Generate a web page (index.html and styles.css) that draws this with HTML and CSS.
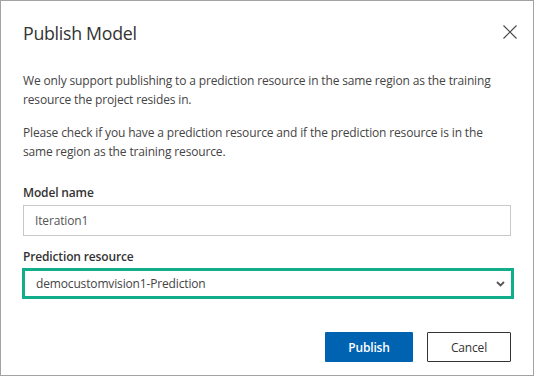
FILE: index.html
```html
<!DOCTYPE html>
<html>
<head>
<meta charset="utf-8">
<link rel="stylesheet" href="styles.css">
</head>
<body>
<div class="dialog">
  <div class="header">
    <div class="title">Publish Model</div>
    <div class="close">
      <svg width="14" height="14" viewBox="0 0 14 14"><path d="M0.5 0.5 L13.5 13.5 M13.5 0.5 L0.5 13.5" stroke="#444" stroke-width="1.1" fill="none"/></svg>
    </div>
  </div>
  <p class="text p1">We only support publishing to a prediction resource in the same region as the training resource the project resides in.</p>
  <p class="text p2">Please check if you have a prediction resource and if the prediction resource is in the same region as the training resource.</p>
  <div class="label l1">Model name</div>
  <div class="input">Iteration1</div>
  <div class="label l2">Prediction resource</div>
  <div class="select">
    <span>democustomvision1-Prediction</span>
    <svg width="9" height="6" viewBox="0 0 9 6"><path d="M1 1 L4.5 4.5 L8 1" stroke="#555" stroke-width="1.8" fill="none"/></svg>
  </div>
  <div class="footer">
    <div class="btn primary">Publish</div>
    <div class="btn secondary">Cancel</div>
  </div>
</div>
</body>
</html>
```
FILE: styles.css
```css
html, body {
  margin: 0;
  padding: 0;
  background: #ffffff;
}
.dialog {
  box-sizing: border-box;
  width: 534px;
  height: 376px;
  border: 1px solid #a3a3a3;
  padding: 0 22px;
  display: flex;
  flex-direction: column;
  font-family: "Open Sans", "Noto Sans", sans-serif;
  color: #444;
  letter-spacing: -0.15px;
}
.header {
  display: flex;
  justify-content: space-between;
  align-items: center;
  padding-top: 20px;
  height: 24px;
}
.title {
  font-size: 17.8px;
  font-weight: 400;
  color: #333;
  line-height: 24px;
  letter-spacing: -0.3px;
}
.close {
  width: 26px;
  height: 26px;
  display: flex;
  align-items: center;
  justify-content: center;
  margin-right: -12px;
  margin-top: -2px;
}
.text {
  margin: 0;
  max-width: 480px;
  font-size: 12px;
  line-height: 19px;
}
.p1 { margin-top: 26px; }
.p2 { margin-top: 14px; }
.label {
  font-size: 12px;
  line-height: 19px;
  color: #333;
  font-weight: 600;
}
.l1 { margin-top: 22px; }
.l2 { margin-top: 11px; }
.input {
  box-sizing: border-box;
  margin-top: 3px;
  height: 31px;
  border: 1px solid #c8c8c8;
  padding: 0 11px;
  display: flex;
  align-items: center;
  font-size: 12px;
  color: #555;
}
.select {
  box-sizing: border-box;
  margin-top: 2px;
  margin-left: -1px;
  margin-right: -3px;
  height: 31px;
  border: 3px solid #12ad8b;
  padding: 0 6px 0 11px;
  display: flex;
  align-items: center;
  justify-content: space-between;
  font-size: 12px;
  color: #444;
}
.footer {
  display: flex;
  justify-content: flex-end;
  gap: 14px;
  margin-top: 33px;
}
.btn {
  box-sizing: border-box;
  height: 30px;
  display: flex;
  align-items: center;
  justify-content: center;
  font-size: 12px;
}
.primary {
  width: 88px;
  background: #0063b1;
  color: #ffffff;
  font-weight: 600;
  border-radius: 1px;
}
.secondary {
  width: 84px;
  border: 1px solid #333;
  color: #333;
  border-radius: 1px;
}
```
